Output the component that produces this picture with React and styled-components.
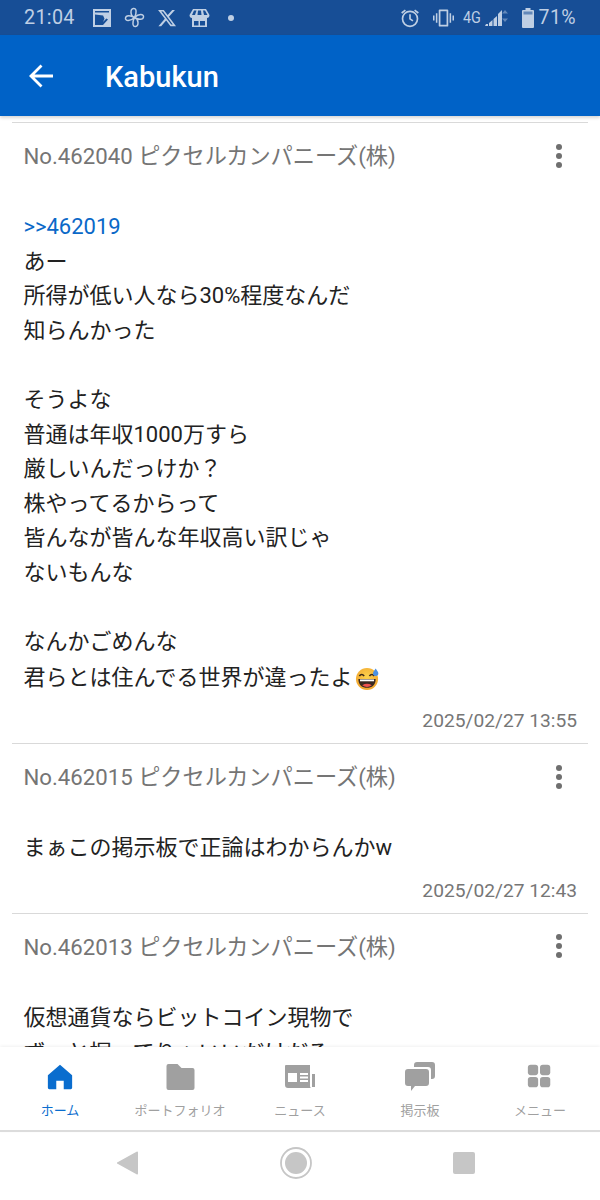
import React from "react";
import styled, { createGlobalStyle } from "styled-components";

const Global = createGlobalStyle`
  html, body { margin: 0; padding: 0; background: #fff; }
  * { box-sizing: border-box; }
`;

const Page = styled.div`
  width: 600px;
  height: 1200px;
  display: flex;
  flex-direction: column;
  overflow: hidden;
  background: #fff;
  font-family: Roboto, "Noto Sans CJK JP", sans-serif;
`;

const StatusBar = styled.div`
  height: 35px;
  flex: none;
  background: #174e96;
  color: #bfcfe4;
  display: flex;
  align-items: center;
  padding: 0 24px;
`;
const Time = styled.span`
  font-size: 19.8px;
  letter-spacing: 0.3px;
  width: 56px;
`;
const StatusLeft = styled.div`
  display: flex;
  align-items: center;
  gap: 12px;
  flex: 1;
`;
const StatusRight = styled.div`
  display: flex;
  align-items: center;
`;
const NetLabel = styled.span`
  font-size: 16px;
  margin: 0 0 0 8px;
  transform: scaleX(0.9);
`;
const Percent = styled.span`
  font-size: 19.5px;
  letter-spacing: 0.4px;
  margin-left: 5px;
`;
const Dot = styled.span`
  width: 6px;
  height: 6px;
  border-radius: 50%;
  background: #bfcfe4;
  margin-left: 6px;
`;

const AppBar = styled.header`
  height: 81px;
  flex: none;
  background: #0062c7;
  color: #fff;
  display: flex;
  align-items: center;
  padding: 0 0 0 28px;
  gap: 51px;
  box-shadow: 0 2px 3px rgba(0, 0, 0, 0.16);
  position: relative;
  z-index: 2;
`;
const Title = styled.h1`
  margin: 4px 0 0;
  font-size: 29px;
  font-weight: 500;
  line-height: 1;
`;

const Feed = styled.main`
  flex: 1;
  min-height: 0;
  overflow: hidden;
  padding: 6px 12px 0;
`;
const Post = styled.article`
  border-top: 1px solid #d9d9d9;
`;
const PostHead = styled.div`
  height: 62px;
  display: flex;
  align-items: center;
  justify-content: space-between;
  padding: 0 26px 0 11.5px;
  color: #757575;
  font-size: 22.2px;
`;
const Kebab = styled.span`
  display: flex;
  flex-direction: column;
  gap: 3px;
  margin-top: 3px;
  i {
    display: block;
    width: 6px;
    height: 6px;
    border-radius: 50%;
    background: #6f6f6f;
  }
`;
const Body = styled.div`
  padding: 25px 11.5px 0;
  font-size: 22px;
  line-height: 34.6px;
  color: #222;
`;
const Line = styled.div`
  min-height: 34.6px;
  white-space: nowrap;
  display: flex;
  align-items: center;
`;
const EmojiLine = styled(Line)`
  min-height: 36.6px;
`;
const Reply = styled(Line)`
  color: #0a68c8;
`;
const EmojiIcon = styled.svg`
  flex: none;
  margin-left: 3px;
`;
const Stamp = styled.div`
  text-align: right;
  padding: 13px 11px 10px 0;
  font-size: 19.2px;
  line-height: 24px;
  color: #767676;
`;

const BottomNav = styled.nav`
  height: 85px;
  flex: none;
  background: #fff;
  display: grid;
  grid-template-columns: repeat(5, 1fr);
  border-bottom: 2px solid #dcdcdc;
  box-shadow: 0 -1px 3px rgba(0, 0, 0, 0.06);
  position: relative;
`;
const NavItem = styled.div`
  display: flex;
  flex-direction: column;
  align-items: center;
  padding-top: 15px;
  color: ${(p) => (p.$active ? "#0a6dce" : "#a0a0a0")};
  font-size: 13px;
`;
const NavIconBox = styled.span`
  height: 30px;
  display: flex;
  align-items: center;
  justify-content: center;
`;
const NavLabel = styled.span`
  margin-top: 10px;
  line-height: 18px;
  white-space: nowrap;
`;
const SystemBar = styled.div`
  height: 68px;
  flex: none;
  display: flex;
  align-items: center;
  justify-content: center;
  gap: 141px;
  padding: 0 9px 6px 0;
  color: #c6c6c6;
`;

const Back = () => (
  <svg width="26" height="26" viewBox="0 0 26 26" fill="none" stroke="#fff" strokeWidth="2.8">
    <path d="M25 13H3M13.500 2.500 3 13l10.500 10.500" />
  </svg>
);

const Emoji = () => (
  <EmojiIcon width="25" height="25" viewBox="0 0 26 26">
    <defs>
      <radialGradient id="f" cx="50%" cy="40%" r="60%">
        <stop offset="0" stopColor="#fcd34d" />
        <stop offset="1" stopColor="#f2a52e" />
      </radialGradient>
    </defs>
    <circle cx="12.500" cy="13.500" r="11.500" fill="url(#f)" />
    <path d="M4.500 10.500q2.500-3.400 5 0M15 10.500q2.500-3.400 5 0" fill="none" stroke="#3c2a1a" strokeWidth="1.700" />
    <path d="M3.500 13.500h18c0 6.500-4 9.200-9 9.200s-9-2.700-9-9.200z" fill="#3a2a22" />
    <path d="M5.200 14h14.600v1.900H5.200z" fill="#fff" />
    <path d="M7.500 20q5-3 10 0q-5 3.500-10 0z" fill="#ef5350" />
    <path d="M21.500 2.500c1.500 2.200 2.800 3.500 2.800 5a2.800 2.800 0 0 1-5.600 0c0-1.500 1.300-2.800 2.800-5z" fill="#4a90e2" />
  </EmojiIcon>
);

const Posts = [
  {
    no: "No.462040 ピクセルカンパニーズ(株)",
    date: "2025/02/27 13:55",
    reply: ">>462019",
    lines: ["あー", "所得が低い人なら30%程度なんだ", "知らんかった", "", "そうよな", "普通は年収1000万すら", "厳しいんだっけか？", "株やってるからって", "皆んなが皆んな年収高い訳じゃ", "ないもんな", "", "なんかごめんな"],
    emojiLine: "君らとは住んでる世界が違ったよ",
  },
  { no: "No.462015 ピクセルカンパニーズ(株)", date: "2025/02/27 12:43", lines: ["まぁこの掲示板で正論はわからんかw"] },
  { no: "No.462013 ピクセルカンパニーズ(株)", lines: ["仮想通貨ならビットコイン現物で", "ずっと握ってりゃいいだけだろ"] },
];

const NavIcons = {
  home: <path d="M15 2 2 13v13.500a1.500 1.500 0 0 0 1.500 1.500H11v-9h8v9h7.500a1.500 1.500 0 0 0 1.500-1.500V13z" fill="currentColor" />,
  folder: <path d="M3 2h9l4 4h11a2 2 0 0 1 2 2v18a2 2 0 0 1-2 2H3a2 2 0 0 1-2-2V4a2 2 0 0 1 2-2z" fill="currentColor" transform="translate(.5)" />,
  news: (
    <g fill="currentColor">
      <path fillRule="evenodd" d="M1 3h24v21a2 2 0 0 0 1 2H3a3 3 0 0 1-3-3V4a1 1 0 0 1 1-1zm2 8v9h9v-9zm12 0v2h8v-2zm0 3.500v2h8v-2zm0 3.500v2h8v-2z" />
      <path d="M27 12h3v13h-3z" />
    </g>
  ),
  board: (
    <g fill="currentColor">
      <path d="M12 0h15a3 3 0 0 1 3 3v11a3 3 0 0 1-3 3h-1V8a3 3 0 0 0-3-3H9V3a3 3 0 0 1 3-3z" />
      <path d="M3 7h18a3 3 0 0 1 3 3v11a3 3 0 0 1-3 3H10l-4 5v-5H3a3 3 0 0 1-3-3V10a3 3 0 0 1 3-3z" />
    </g>
  ),
  menu: (
    <g fill="currentColor">
      <rect x="2" y="2" width="11" height="11" rx="3" />
      <rect x="15" y="2" width="11" height="11" rx="3" />
      <rect x="2" y="15" width="11" height="11" rx="3" />
      <rect x="15" y="15" width="11" height="11" rx="3" />
    </g>
  ),
};
const Tabs = [
  ["home", "ホーム", 28, true],
  ["folder", "ポートフォリオ", 30],
  ["news", "ニュース", 30],
  ["board", "掲示板", 30],
  ["menu", "メニュー", 28],
];

export default function App() {
  return (
    <Page>
      <Global />
      <StatusBar>
        <StatusLeft>
          <Time>21:04</Time>
          <svg width="20" height="20" viewBox="0 0 20 20" fill="currentColor">
            <path fillRule="evenodd" d="M1 1h18v18H1zm2 2v1.600h14V3zm0 3.400V17h8l5-5.500-1.600-1-3.400 3.600 1.500-3.400-1.400-3.300z" />
          </svg>
          <svg width="21" height="21" viewBox="0 0 21 21" fill="none" stroke="currentColor" strokeWidth="1.500">
            <path d="M10.500 10.500C6 9 6 2 9.500 1.500c3-.4 3.500 4 1 9zM10.500 10.500C15 6 20 7 19.500 10c-.4 3-5 3-9 .5zM10.500 10.500c4.500 1.500 4.500 8.500 1 9-3 .4-3.500-4-1-9zM10.500 10.500C6 15 1 14 1.500 11c.4-3 5-3 9-.5z" />
          </svg>
          <svg width="20" height="20" viewBox="0 0 24 24" fill="currentColor">
            <path d="M18.244 2.250h3.308l-7.227 8.260 8.502 11.240H16.170l-5.214-6.817L4.990 21.750H1.680l7.730-8.835L1.254 2.250H8.080l4.713 6.231zm-1.161 17.520h1.833L7.084 4.126H5.117z" />
          </svg>
          <svg width="21" height="20" viewBox="0 0 21 20" fill="currentColor">
            <path fillRule="evenodd" d="M4 1h13l3.500 6c0 2-1 3-2.500 3v9H3v-9C1.500 10 .5 9 .5 7zm1 10v6.500h4.500V13H5zm6 2v4.500h5V13h-5zM5 2.500 3 7h3l1.500-4.500zm4 0L8.500 7h4L12 2.500zm5 0L15 7h3.500L16 2.500z" />
          </svg>
          <Dot />
        </StatusLeft>
        <StatusRight>
          <svg width="20" height="20" viewBox="0 0 24 24" fill="none" stroke="currentColor" strokeWidth="2">
            <circle cx="12" cy="13" r="9" />
            <path d="M12 7.500V13l3.500 2.500M2 6l4.500-3.500M22 6l-4.500-3.500" />
          </svg>
          <svg width="21" height="18" viewBox="0 0 22 18" fill="currentColor" style={{ marginLeft: 13 }}>
            <path fillRule="evenodd" d="M7 0h8a1 1 0 0 1 1 1v16a1 1 0 0 1-1 1H7a1 1 0 0 1-1-1V1a1 1 0 0 1 1-1zm.8 2v14h6.400V2zM3 4h1.600v10H3zM17.400 4H19v10h-1.600zM0 6.500h1.600v5H0zM20.400 6.500H22v5h-1.600z" />
          </svg>
          <NetLabel>4G</NetLabel>
          <svg width="24" height="20" viewBox="0 0 24 20" fill="currentColor" style={{ marginLeft: 3 }}>
            <path d="M0 18h3v-2H1zM4 18h3.500v-6L4 15zM8.500 18H12V8l-3.500 3zM13 18h4V2l-4 4z" />
            <path d="M20 2l3 3.500h-6zM20 14l-3-3.500h6z" opacity=".45" />
          </svg>
          <svg width="12" height="20" viewBox="0 0 12 20" fill="currentColor" style={{ marginLeft: 13 }}>
            <path d="M3.500 0h5v2H11a1 1 0 0 1 1 1v16a1 1 0 0 1-1 1H1a1 1 0 0 1-1-1V3a1 1 0 0 1 1-1h2.500z" />
            <path d="M1.500 3.500h9v3h-9z" fill="#174e96" opacity=".55" />
          </svg>
          <Percent>71%</Percent>
        </StatusRight>
      </StatusBar>

      <AppBar>
        <Back />
        <Title>Kabukun</Title>
      </AppBar>

      <Feed>
        {Posts.map((p) => (
          <Post key={p.no}>
            <PostHead>
              <span>{p.no}</span>
              <Kebab><i /><i /><i /></Kebab>
            </PostHead>
            <Body>
              {p.reply && <Reply>{p.reply}</Reply>}
              {p.lines.map((l, i) => (
                <Line key={i}>{l}</Line>
              ))}
              {p.emojiLine && <EmojiLine>{p.emojiLine}<Emoji /></EmojiLine>}
            </Body>
            {p.date && <Stamp>{p.date}</Stamp>}
          </Post>
        ))}
      </Feed>

      <BottomNav>
        {Tabs.map(([k, label, size, active]) => (
          <NavItem key={k} $active={active}>
            <NavIconBox>
              <svg width={size} height={size} viewBox="0 0 30 30">{NavIcons[k]}</svg>
            </NavIconBox>
            <NavLabel>{label}</NavLabel>
          </NavItem>
        ))}
      </BottomNav>

      <SystemBar>
        <svg width="22" height="24" viewBox="0 0 22 24" fill="currentColor">
          <path d="M21 1.500v21a1 1 0 0 1-1.500.8L1 13a1 1 0 0 1 0-2L19.500.7a1 1 0 0 1 1.500.8z" />
        </svg>
        <svg width="32" height="32" viewBox="0 0 32 32" fill="currentColor">
          <circle cx="16" cy="16" r="15" fill="none" stroke="currentColor" strokeWidth="1.800" />
          <circle cx="16" cy="16" r="11" />
        </svg>
        <svg width="22" height="22" viewBox="0 0 22 22" fill="currentColor">
          <rect width="22" height="22" rx="2" />
        </svg>
      </SystemBar>
    </Page>
  );
}
